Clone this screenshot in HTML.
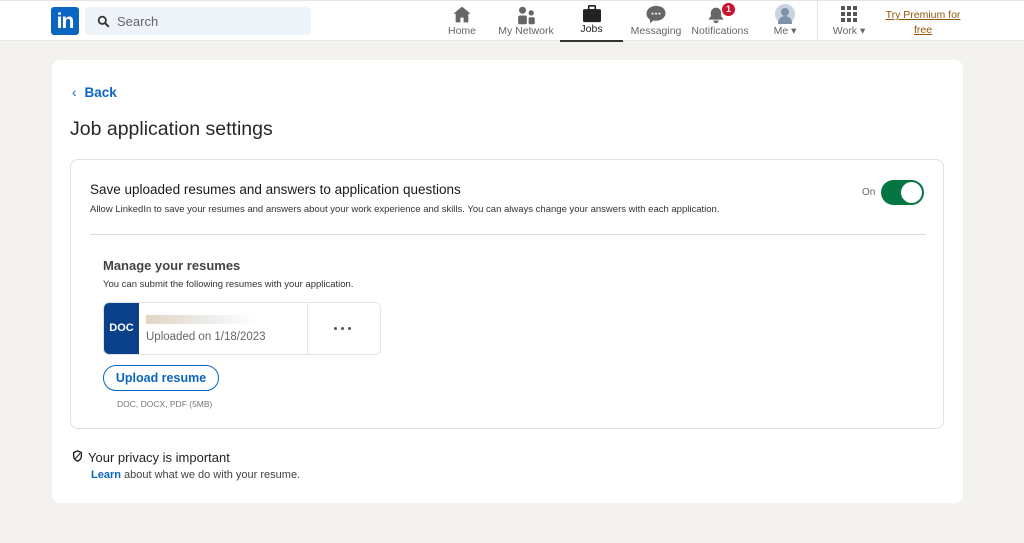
<!DOCTYPE html>
<html><head><meta charset="utf-8"><style>
*{box-sizing:border-box;margin:0;padding:0}
body{width:1024px;height:543px;background:#f4f2ee;font-family:"Liberation Sans",sans-serif;position:relative;overflow:hidden;color:rgba(0,0,0,.9)}
.hdr{position:absolute;left:0;top:0;width:1024px;height:41px;background:#fff;border-bottom:1px solid #e8e8e8;border-top:1px solid #e5e5e5}
.logo{position:absolute;left:51px;top:6px;width:28px;height:28px;background:#0a66c2;border-radius:3px;color:#fff;font-weight:bold;font-size:21px;line-height:29px;text-align:center;letter-spacing:-1px}
.search{position:absolute;left:85px;top:6px;width:226px;height:28px;background:#edf3f8;border-radius:4px;font-size:13px;color:#666;padding:7px 0 0 32px}
.nav{position:absolute;top:0;height:41px;text-align:center;font-size:10.5px;color:#666}
.nav .lbl{position:absolute;bottom:5px;left:0;right:0;white-space:nowrap}
.nav svg{position:absolute;top:4px;left:50%;transform:translateX(-50%)}
.a{position:absolute}
.card{position:absolute;left:52px;top:60px;width:911px;height:443px;background:#fff;border-radius:8px}
.inner{position:absolute;left:70px;top:159px;width:874px;height:270px;border:1px solid #e0e0e0;border-radius:8px}
</style></head><body>
<div class="hdr">
<div class="logo">in</div>
<div class="search"><svg class="a" style="left:12px;top:8px" width="13" height="13" viewBox="0 0 16 16"><circle cx="6.5" cy="6.5" r="4.5" stroke="#333" stroke-width="2.2" fill="none"/><path d="M10 10l4.5 4.5" stroke="#333" stroke-width="2.4"/></svg>Search</div>
<div class="nav" style="left:440px;width:44px"><svg width="21" height="19" viewBox="0 0 24 24"><path d="M12 2L1 11h3v11h6v-6h4v6h6V11h3z" fill="#666"/></svg><div class="lbl">Home</div></div>
<div class="nav" style="left:496px;width:60px"><svg width="21" height="21" viewBox="0 0 24 24"><circle cx="8" cy="6" r="4" fill="#666"/><rect x="3" y="12" width="10" height="10" rx="2" fill="#666"/><circle cx="18" cy="9" r="3" fill="#666"/><rect x="15" y="14" width="7" height="8" rx="1.5" fill="#666"/></svg><div class="lbl">My Network</div></div>
<div class="nav" style="left:560px;width:63px;color:#222;border-bottom:2px solid #333"><svg width="20" height="18" viewBox="0 0 24 22"><rect x="1" y="5" width="22" height="16" rx="2" fill="#222"/><rect x="8" y="1" width="8" height="5" rx="1" fill="none" stroke="#222" stroke-width="2"/></svg><div class="lbl">Jobs</div></div>
<div class="nav" style="left:630px;width:52px"><svg width="21" height="19" viewBox="0 0 24 22"><path d="M12 1C5.5 1 1 5 1 10c0 3 1.6 5.5 4 7v4l4-3c1 .2 2 .3 3 .3 6.5 0 11-4 11-9S18.5 1 12 1z" fill="#666"/><circle cx="8" cy="10" r="1.2" fill="#fff"/><circle cx="12" cy="10" r="1.2" fill="#fff"/><circle cx="16" cy="10" r="1.2" fill="#fff"/></svg><div class="lbl">Messaging</div></div>
<div class="nav" style="left:690px;width:60px"><svg width="21" height="19" viewBox="0 0 24 22" style="margin-left:-4px"><path d="M3 17h18l-3-4V9a6 6 0 0 0-12 0v4z M9 18a3 3 0 0 0 6 0z" fill="#666"/></svg><div class="a" style="left:32px;top:2px;width:13px;height:13px;border-radius:50%;background:#cb112d;color:#fff;font-size:9px;line-height:13px;font-weight:bold">1</div><div class="lbl">Notifications</div></div>
<div class="nav" style="left:766px;width:38px"><div class="a" style="left:9px;top:3px;width:20px;height:20px;border-radius:50%;background:#c9d4de"><div class="a" style="left:6px;top:4px;width:8px;height:8px;border-radius:50%;background:#7d93ab"></div><div class="a" style="left:3px;top:12px;width:14px;height:8px;border-radius:7px 7px 0 0;background:#7d93ab"></div></div><div class="lbl">Me ▾</div></div>
<div class="a" style="left:817px;top:0;width:1px;height:41px;background:#e5e5e5"></div>
<div class="nav" style="left:828px;width:42px"><svg width="18" height="18" viewBox="0 0 18 18" fill="#555"><rect x="1" y="1" width="4" height="4"/><rect x="7" y="1" width="4" height="4"/><rect x="13" y="1" width="4" height="4"/><rect x="1" y="7" width="4" height="4"/><rect x="7" y="7" width="4" height="4"/><rect x="13" y="7" width="4" height="4"/><rect x="1" y="13" width="4" height="4"/><rect x="7" y="13" width="4" height="4"/><rect x="13" y="13" width="4" height="4"/></svg><div class="lbl">Work ▾</div></div>
<div class="a" style="left:880px;top:7px;width:86px;text-align:center;font-size:10.5px;line-height:15px;color:#915907;text-decoration:underline">Try Premium for free</div>
</div>

<div class="card">
<div class="a" style="left:20px;top:25px;font-size:13.5px;color:#0a66c2;font-weight:bold"><span style="font-weight:normal;margin-right:8px">‹</span>Back</div>
<div class="a" style="left:18px;top:58px;font-size:19.5px;color:rgba(0,0,0,.85)">Job application settings</div>
</div>
<div class="inner">
<div class="a" style="left:19px;top:22px;font-size:13.5px">Save uploaded resumes and answers to application questions</div>
<div class="a" style="left:19px;top:44px;font-size:9.5px;color:#333">Allow LinkedIn to save your resumes and answers about your work experience and skills. You can always change your answers with each application.</div>
<div class="a" style="left:791px;top:27px;font-size:10px;color:#666">On</div>
<div class="a" style="left:810px;top:20px;width:43px;height:25px;border-radius:13px;background:#057642"><div class="a" style="right:2px;top:2px;width:21px;height:21px;border-radius:50%;background:#fff"></div></div>
<div class="a" style="left:19px;top:74px;width:836px;height:1px;background:#ddd"></div>
<div class="a" style="left:32px;top:98px;font-size:13px;font-weight:bold;color:#444">Manage your resumes</div>
<div class="a" style="left:32px;top:119px;font-size:9.5px;color:#333">You can submit the following resumes with your application.</div>
<div class="a" style="left:32px;top:142px;width:278px;height:53px;border:1px solid #e4e4e4;border-radius:6px;overflow:hidden">
<div class="a" style="left:0;top:0;width:35px;height:53px;background:#0a3f8a;color:#fff;font-weight:bold;font-size:11px;line-height:51px;text-align:center">DOC</div>
<div class="a" style="left:42px;top:12px;width:110px;height:9px;background:linear-gradient(90deg,#e2d5c2,#eee 60%,#fff)"></div>
<div class="a" style="left:42px;top:28px;font-size:11.5px;color:#666">Uploaded on 1/18/2023</div>
<div class="a" style="left:203px;top:0;width:1px;height:53px;background:#e4e4e4"></div>
<div class="a" style="left:230px;top:24px;width:3px;height:3px;border-radius:50%;background:#555"></div>
<div class="a" style="left:237px;top:24px;width:3px;height:3px;border-radius:50%;background:#555"></div>
<div class="a" style="left:244px;top:24px;width:3px;height:3px;border-radius:50%;background:#555"></div>
</div>
<div class="a" style="left:32px;top:205px;width:116px;height:26px;border:1px solid #0a66c2;border-radius:13px;color:#0a66c2;font-weight:bold;font-size:12.5px;text-align:center;line-height:24px">Upload resume</div>
<div class="a" style="left:46px;top:239px;font-size:8.5px;color:#777">DOC, DOCX, PDF (5MB)</div>
</div>
<svg class="a" style="left:72px;top:450px" width="11" height="12" viewBox="0 0 12 14"><path d="M6 1L1.5 3v4c0 3 2 5 4.5 6 2.5-1 4.5-3 4.5-6V3z" fill="none" stroke="#222" stroke-width="1.6"/><path d="M3.5 10L9 4" stroke="#222" stroke-width="1.3"/></svg>
<div class="a" style="left:88px;top:450px;font-size:13px;color:#222">Your privacy is important</div>
<div class="a" style="left:91px;top:469px;font-size:11px;color:#444"><b style="color:#0a66c2;font-weight:bold">Learn</b> about what we do with your resume.</div>
</body></html>
